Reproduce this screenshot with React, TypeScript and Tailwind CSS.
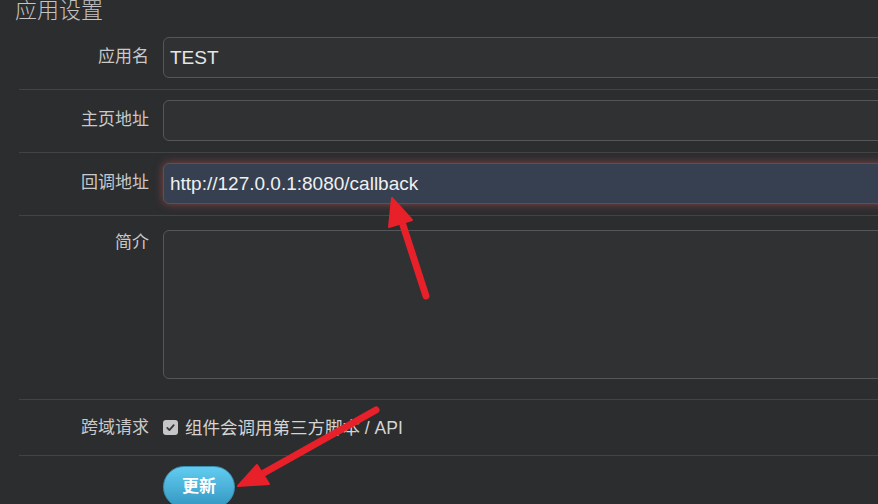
import React from 'react';

const font = { fontFamily: '"Liberation Sans", Arial, "Noto Sans CJK SC", sans-serif' };

function Row({ label, children, className = '' }: { label: string; children: React.ReactNode; className?: string }) {
  return (
    <div className={`flex border-b border-[#424345] ${className}`}>
      <label className="w-[131px] shrink-0 pr-[1px] text-right text-[17px] leading-[20px] text-[#c9c9c9]">{label}</label>
      <div className="ml-[13px] flex-1">{children}</div>
    </div>
  );
}

export default function App() {
  return (
    <div className="relative h-[504px] w-[878px] overflow-hidden bg-[#2c2d2f]" style={font}>
      <h3 className="-mt-[4px] pl-[15px] text-[22px] font-light leading-[30px] text-[#c4c4c4]">应用设置</h3>

      <div className="ml-[19px] w-[1000px]">
        <Row label="应用名" className="pb-[11px] pt-[11px] [&>label]:pt-[10px]">
          <input
            readOnly
            value="TEST"
            className="h-[41px] w-full rounded-[6px] border border-[#555658] bg-[#303133] px-[6px] text-[19px] text-[#e6e6e6] outline-none"
          />
        </Row>
        <Row label="主页地址" className="py-[10px] pb-[11px] [&>label]:pt-[10px]">
          <input
            readOnly
            value=""
            className="h-[41px] w-full rounded-[6px] border border-[#555658] bg-[#303133] px-[6px] text-[19px] text-[#e6e6e6] outline-none"
          />
        </Row>
        <Row label="回调地址" className="py-[10px] pb-[11px] [&>label]:pt-[10px]">
          <input
            readOnly
            value="http://127.0.0.1:8080/callback"
            className="h-[41px] w-full rounded-[6px] border border-[#6b4a4c] bg-[#364050] px-[6px] text-[19px] text-[#f0f0f0] shadow-[0_0_8px_rgba(200,90,90,0.55)] outline-none"
          />
        </Row>
        <Row label="简介" className="pb-[20px] pt-[14px] [&>label]:pt-[3px]">
          <textarea
            readOnly
            className="block h-[149px] w-full resize-none rounded-[6px] border border-[#555658] bg-[#303133] px-[6px] text-[18px] text-[#e6e6e6] outline-none"
          />
        </Row>
        <Row label="跨域请求" className="h-[56px] items-center">
          <div className="flex items-center gap-[7px]">
            <span className="flex h-[15px] w-[15px] items-center justify-center rounded-[3px] bg-[#c6c6c6]">
              <svg viewBox="0 0 12 12" className="h-[11px] w-[11px]" fill="none" stroke="#3a3a3a" strokeWidth="2" strokeLinecap="round" strokeLinejoin="round">
                <path d="M2.5 6.5l2.3 2.3L9.5 3.5" />
              </svg>
            </span>
            <span className="text-[17.5px] leading-[20px] text-[#d4d4d4]">组件会调用第三方脚本 / API</span>
          </div>
        </Row>
        <div className="flex pt-[10px]">
          <div className="ml-[144px]">
            <button className="h-[42px] w-[72px] rounded-full border border-[#3b8fb0] bg-gradient-to-b from-[#62ccf0] to-[#3398c2] text-[17px] font-bold text-white">
              更新
            </button>
          </div>
        </div>
      </div>

      {/* annotation arrows */}
      <svg className="pointer-events-none absolute inset-0" width="878" height="504" viewBox="0 0 878 504">
        <g fill="#e8202a" stroke="#e8202a" strokeLinecap="round" strokeLinejoin="round">
          <line x1="426" y1="296" x2="402" y2="222" strokeWidth="7" />
          <polygon points="392,198 389,227 412,220" strokeWidth="2" />
          <line x1="376" y1="410" x2="262" y2="474" strokeWidth="7" />
          <polygon points="238,486 257,465 269,484" strokeWidth="2" />
        </g>
      </svg>
    </div>
  );
}
